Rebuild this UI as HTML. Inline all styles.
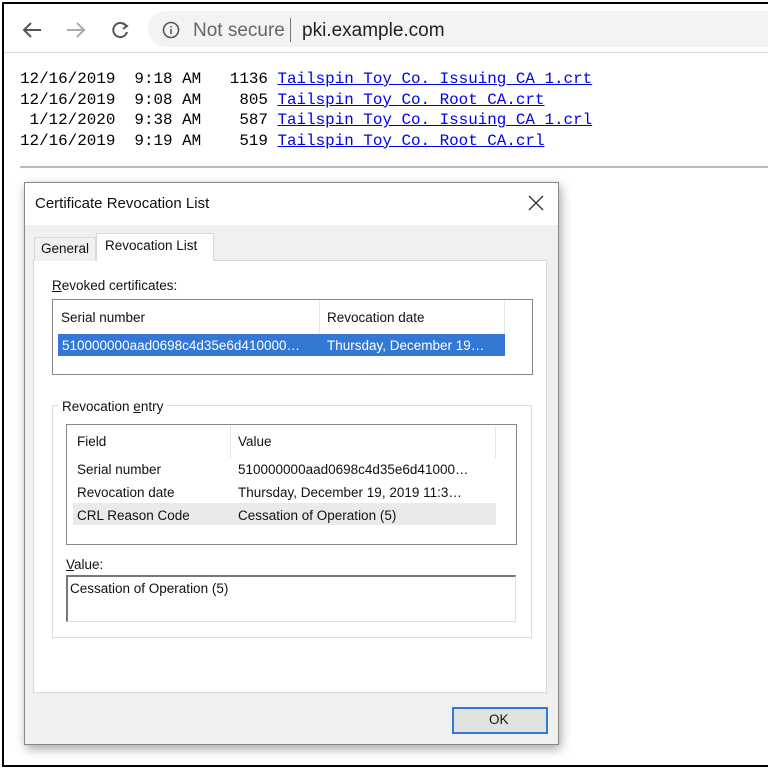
<!DOCTYPE html>
<html><head><style>
*{margin:0;padding:0;box-sizing:border-box}
body{width:768px;height:771px;background:#fff;position:relative;overflow:hidden;font-family:"Liberation Sans",sans-serif}
.a{position:absolute}
.mono{font-family:"Liberation Mono",monospace;font-size:15.9px;white-space:pre;line-height:20.6px}
.mono a{color:#0000ee;text-decoration:underline}
.w{font-size:13.5px;color:#111;white-space:nowrap}
</style></head><body>
<div class="a" style="left:2px;top:2px;width:766px;height:765px;border-left:2px solid #000;border-top:2px solid #000;border-bottom:2px solid #000"></div>
<div class="a" style="left:4px;top:52px;width:764px;height:1px;background:#ddd"></div>
<svg class="a" style="left:20px;top:18px" width="120" height="24" viewBox="0 0 120 24" fill="none" stroke-width="2">
<path d="M21 12H5M11 5L4 12L11 19" stroke="#555"/>
<path d="M47 12H63M57 5L64 12L57 19" stroke="#aaa"/>
<path d="M106 8A7 7 0 1 0 107 14" stroke="#555"/><path d="M103 5L107 8L103 11" stroke="#555"/>
</svg>
<div class="a" style="left:148px;top:11px;width:640px;height:36px;border-radius:18px;background:#f1f3f4"></div>
<svg class="a" style="left:162px;top:21px" width="18" height="18" viewBox="0 0 18 18"><circle cx="9" cy="9" r="7.5" fill="none" stroke="#555" stroke-width="1.6"/><rect x="8.2" y="8" width="1.6" height="5" fill="#555"/><rect x="8.2" y="5" width="1.6" height="1.6" fill="#555"/></svg>
<div class="a" style="left:193px;top:20px;font-size:19px;color:#666">Not secure</div>
<div class="a" style="left:290px;top:18px;width:1px;height:24px;background:#777"></div>
<div class="a" style="left:302px;top:20px;font-size:19px;color:#222">pki.example.com</div>
<div class="a mono" style="left:20px;top:69px">12/16/2019  9:18 AM   1136 <a>Tailspin Toy Co. Issuing CA 1.crt</a>
12/16/2019  9:08 AM    805 <a>Tailspin Toy Co. Root CA.crt</a>
 1/12/2020  9:38 AM    587 <a>Tailspin Toy Co. Issuing CA 1.crl</a>
12/16/2019  9:19 AM    519 <a>Tailspin Toy Co. Root CA.crl</a></div>
<div class="a" style="left:20px;top:166px;width:748px;height:2px;background:#bbb"></div>

<div class="a" style="left:24px;top:182px;width:535px;height:563px;background:#f0f0f0;border:1px solid #888;box-shadow:2px 4px 10px rgba(0,0,0,.35)"></div>
<div class="a" style="left:25px;top:183px;width:533px;height:42px;background:#fff"></div>
<div class="a w" style="left:35px;top:195px;font-size:15px">Certificate Revocation List</div>
<svg class="a" style="left:528px;top:195px" width="16" height="16"><path d="M1 1L15 15M15 1L1 15" stroke="#333" stroke-width="1.3"/></svg>
<div class="a" style="left:33px;top:260px;width:514px;height:433px;background:#fff;border:1px solid #d9d9d9"></div>
<div class="a" style="left:34px;top:237px;width:62px;height:24px;background:#f0f0f0;border:1px solid #d9d9d9;border-bottom:none"></div>
<div class="a w" style="left:41px;top:241px">General</div>
<div class="a" style="left:96px;top:233px;width:118px;height:28px;background:#fff;border:1px solid #d9d9d9;border-bottom:none"></div>
<div class="a w" style="left:105px;top:238px">Revocation List</div>

<div class="a w" style="left:52px;top:278px"><u>R</u>evoked certificates:</div>
<div class="a" style="left:52px;top:299px;width:481px;height:76px;background:#fff;border:1px solid #888"></div>
<div class="a" style="left:319px;top:301px;width:1px;height:33px;background:#e5e5e5"></div>
<div class="a" style="left:504px;top:301px;width:1px;height:33px;background:#e5e5e5"></div>
<div class="a w" style="left:61px;top:310px">Serial number</div>
<div class="a w" style="left:327px;top:310px">Revocation date</div>
<div class="a" style="left:58px;top:334px;width:447px;height:22px;background:#3378d5"></div>
<div class="a w" style="left:62px;top:338px;color:#fff">510000000aad0698c4d35e6d410000…</div>
<div class="a w" style="left:327px;top:338px;color:#fff">Thursday, December 19…</div>

<div class="a" style="left:52px;top:405px;width:480px;height:233px;border:1px solid #dcdcdc"></div>
<div class="a w" style="left:58px;top:399px;background:#fff;padding:0 4px">Revocation <u>e</u>ntry</div>
<div class="a" style="left:66px;top:424px;width:451px;height:121px;background:#fff;border:1px solid #888"></div>
<div class="a" style="left:230px;top:426px;width:1px;height:32px;background:#e5e5e5"></div>
<div class="a" style="left:495px;top:426px;width:1px;height:32px;background:#e5e5e5"></div>
<div class="a" style="left:73px;top:503px;width:423px;height:22px;background:#eaeaea"></div>
<div class="a w" style="left:77px;top:434px">Field</div><div class="a w" style="left:238px;top:434px">Value</div>
<div class="a w" style="left:77px;top:462px">Serial number</div><div class="a w" style="left:238px;top:462px">510000000aad0698c4d35e6d41000…</div>
<div class="a w" style="left:77px;top:485px">Revocation date</div><div class="a w" style="left:238px;top:485px">Thursday, December 19, 2019 11:3…</div>
<div class="a w" style="left:77px;top:508px">CRL Reason Code</div><div class="a w" style="left:238px;top:508px">Cessation of Operation (5)</div>
<div class="a w" style="left:66px;top:557px"><u>V</u>alue:</div>
<div class="a" style="left:66px;top:575px;width:450px;height:47px;background:#fff;border:1px solid #e0e0e0;border-top:2px solid #777;border-left:2px solid #777"></div>
<div class="a w" style="left:70px;top:581px">Cessation of Operation (5)</div>

<div class="a" style="left:452px;top:707px;width:96px;height:27px;background:#e1e1e1;border:2px solid #2d7ad6"></div>
<div class="a w" style="left:489px;top:712px">OK</div>
</body></html>
